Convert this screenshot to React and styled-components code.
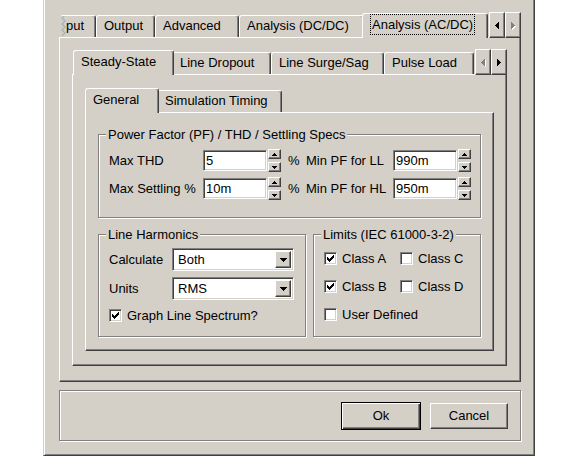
import React from 'react';
import styled, { createGlobalStyle, css } from 'styled-components';

const FACE = '#d4d0c8';
const SHADOW = '#808080';
const DARK = '#404040';
const HI = '#ffffff';

const GlobalStyle = createGlobalStyle`
  html, body { margin: 0; padding: 0; background: #fff; }
  body {
    font-family: "Liberation Sans", Arial, sans-serif;
    font-size: 13px;
    line-height: 15px;
    color: #000;
  }
  *, *::before, *::after { box-sizing: border-box; }
`;

const Window = styled.div`
  margin-left: 43px;
  width: 492px;
  height: 456px;
  background: ${FACE};
  border-left: 1px solid ${FACE};
  border-right: 1px solid ${DARK};
  border-bottom: 1px solid ${DARK};
  box-shadow: inset 1px 0 0 ${HI}, inset -1px -1px 0 ${SHADOW};
  padding: 12px 0 0 15px;
  display: flex;
  flex-direction: column;
`;

/* ---------- tab control ---------- */

const TabControl = styled.div`
  width: ${(p) => p.$w}px;
  display: flex;
  flex-direction: column;
  flex: none;
`;

const TabStrip = styled.div`
  display: flex;
  align-items: flex-end;
  height: 25px;
  padding-left: ${(p) => p.$inset}px;
`;

const Tab = styled.div`
  position: relative;
  flex: none;
  width: ${(p) => p.$w}px;
  height: 22px;
  display: flex;
  align-items: center;
  padding: 0 0 2px ${(p) => (p.$torn ? 0 : 7)}px;
  white-space: nowrap;
  overflow: hidden;
  background: ${FACE};
  border-top: 1px solid ${HI};
  border-left: 1px solid ${(p) => (p.$torn ? FACE : HI)};
  border-right: 1px solid ${DARK};
  box-shadow: inset -1px 0 0 ${SHADOW};
  border-radius: 3px 3px 0 0;
  ${(p) =>
    p.$active &&
    css`
      width: ${p.$w + 4}px;
      height: 25px;
      margin: 0 -2px -1px;
      padding: 0 0 3px 7px;
      z-index: 1;
    `}
`;

const FocusRing = styled.span`
  border: 1px dotted #000;
  padding: 2px 1px;
`;

const TornEdge = styled.svg`
  flex: none;
  width: 5px;
  height: 21px;
  margin-right: 0;
`;

const ArrowPair = styled.div`
  position: relative;
  z-index: 2;
  display: flex;
  margin-left: auto;
  align-self: flex-start;
`;

const ScrollButton = styled.div`
  width: 16px;
  height: 26px;
  display: flex;
  align-items: center;
  justify-content: center;
  background: ${FACE};
  border: 1px solid;
  border-color: ${HI} ${DARK} ${DARK} ${HI};
  box-shadow: inset -1px -1px 0 ${SHADOW};
`;

const Page = styled.div`
  height: ${(p) => p.$h}px;
  background: ${FACE};
  border: 1px solid;
  border-color: ${HI} ${DARK} ${DARK} ${HI};
  box-shadow: inset -1px -1px 0 ${SHADOW};
  padding: ${(p) => p.$pad};
  display: flex;
  flex-direction: column;
  align-items: flex-start;
`;

/* ---------- small pixel glyphs ---------- */

const Glyph = ({ w, h, d, fill = '#000' }) => (
  <svg width={w} height={h} viewBox={`0 0 ${w} ${h}`} shapeRendering="crispEdges">
    <path d={d} fill={fill} />
  </svg>
);

const LEFT = 'M3 0h1v7h-1z M2 1h1v5h-1z M1 2h1v3h-1z M0 3h1v1h-1z';
const RIGHT = 'M0 0h1v7h-1z M1 1h1v5h-1z M2 2h1v3h-1z M3 3h1v1h-1z';
const UP = 'M2 0h1v1h-1z M1 1h3v1h-3z M0 2h5v1h-5z';
const DOWN = 'M0 0h5v1h-5z M1 1h3v1h-3z M2 2h1v1h-1z';
const DROP = 'M0 0h7v1h-7z M1 1h5v1h-5z M2 2h3v1h-3z M3 3h1v1h-1z';
const CHECK =
  'M6 0h1v1h-1z M5 1h2v1h-2z M0 2h1v1h-1z M4 2h3v1h-3z M0 3h2v1h-2z M3 3h3v1h-3z M0 4h5v1h-5z M1 5h3v1h-3z M2 6h1v1h-1z';

const DisabledGlyph = styled.span`
  position: relative;
  display: inline-flex;
  & > svg:first-child {
    position: absolute;
    left: 1px;
    top: 1px;
  }
  & > svg:last-child {
    position: relative;
  }
`;

const Arrow = ({ d, disabled }) =>
  disabled ? (
    <DisabledGlyph>
      <Glyph w={4} h={7} d={d} fill={HI} />
      <Glyph w={4} h={7} d={d} fill={SHADOW} />
    </DisabledGlyph>
  ) : (
    <Glyph w={4} h={7} d={d} />
  );

const TabRow = ({ tabs, inset, leftOn, rightOn }) => (
  <TabStrip $inset={inset}>
    {tabs.map((t) => (
      <Tab key={t.label} $w={t.w} $active={t.active} $torn={t.torn}>
        {t.torn && (
          <TornEdge viewBox="0 0 5 21">
            <polyline
              points="4,0 1,3 4,6 1,9 4,12 1,15 4,18 1,21"
              fill="none"
              stroke="#9fb3bd"
              strokeWidth="1.2"
            />
          </TornEdge>
        )}
        {t.focus ? <FocusRing>{t.label}</FocusRing> : <span>{t.label}</span>}
      </Tab>
    ))}
    {leftOn !== undefined && (
      <ArrowPair>
        <ScrollButton>
          <Arrow d={LEFT} disabled={!leftOn} />
        </ScrollButton>
        <ScrollButton>
          <Arrow d={RIGHT} disabled={!rightOn} />
        </ScrollButton>
      </ArrowPair>
    )}
  </TabStrip>
);

/* ---------- group boxes ---------- */

const Group = styled.div`
  width: ${(p) => (p.$w ? `${p.$w}px` : 'auto')};
  flex: ${(p) => (p.$w ? 'none' : '1')};
  border: 1px solid ${SHADOW};
  box-shadow: inset 1px 1px 0 ${HI}, 1px 1px 0 ${HI};
  padding: 0 9px ${(p) => p.$pb}px 10px;
  display: flex;
  flex-direction: column;
`;

const Caption = styled.div`
  align-self: flex-start;
  margin: -8px 0 0 -3px;
  padding: 0 2px;
  line-height: 15px;
  background: ${FACE};
  white-space: nowrap;
`;

const GroupRow = styled.div`
  display: flex;
  align-items: stretch;
  gap: 7px;
  width: 383px;
  margin-top: 16px;
`;

/* ---------- edit fields ---------- */

const SpecGrid = styled.div`
  display: grid;
  grid-template-columns: 94px 64px 14px 25px 87px 64px 14px;
  grid-auto-rows: 21px;
  row-gap: 7px;
  align-items: center;
  margin-top: 8px;
  white-space: nowrap;
`;

const Unit = styled.span`
  padding-left: 7px;
`;

const Edit = styled.div`
  height: 21px;
  display: flex;
  align-items: center;
  background: #fff;
  border: 1px solid;
  border-color: ${SHADOW} ${HI} ${HI} ${SHADOW};
  box-shadow: inset 1px 1px 0 ${DARK}, inset -1px -1px 0 ${FACE};
  padding: 0 2px 0 2px;
`;

const Spin = styled.div`
  display: flex;
  flex-direction: column;
  gap: 3px;
  padding-left: 1px;
`;

const SpinButton = styled.div`
  width: 13px;
  height: 10px;
  display: flex;
  align-items: center;
  justify-content: center;
  background: ${FACE};
  border: 1px solid;
  border-color: ${HI} ${DARK} ${DARK} ${HI};
  box-shadow: inset -1px -1px 0 ${SHADOW};
`;

const SpinBox = () => (
  <Spin>
    <SpinButton>
      <Glyph w={5} h={3} d={UP} />
    </SpinButton>
    <SpinButton>
      <Glyph w={5} h={3} d={DOWN} />
    </SpinButton>
  </Spin>
);

/* ---------- combo boxes ---------- */

const ComboRow = styled.div`
  display: flex;
  align-items: center;
  margin-top: ${(p) => p.$mt}px;
`;

const RowLabel = styled.span`
  width: 63px;
  flex: none;
`;

const Combo = styled.div`
  width: 122px;
  height: 23px;
  display: flex;
  align-items: center;
  background: #fff;
  border: 1px solid;
  border-color: ${SHADOW} ${HI} ${HI} ${SHADOW};
  box-shadow: inset 1px 1px 0 ${DARK}, inset -1px -1px 0 ${FACE};
  padding: 2px 2px 2px 5px;
`;

const DropButton = styled.div`
  margin-left: auto;
  width: 16px;
  height: 100%;
  display: flex;
  align-items: center;
  justify-content: center;
  background: ${FACE};
  border: 1px solid;
  border-color: ${HI} ${DARK} ${DARK} ${HI};
  box-shadow: inset -1px -1px 0 ${SHADOW};
`;

const ComboBox = ({ value }) => (
  <Combo>
    <span>{value}</span>
    <DropButton>
      <Glyph w={7} h={4} d={DROP} />
    </DropButton>
  </Combo>
);

/* ---------- check boxes ---------- */

const CheckItem = styled.label`
  display: flex;
  align-items: center;
  gap: 5px;
  height: ${(p) => p.$h || 28}px;
  margin-top: ${(p) => p.$mt || 0}px;
  white-space: nowrap;
`;

const Box = styled.span`
  width: 13px;
  height: 13px;
  flex: none;
  display: flex;
  align-items: center;
  justify-content: center;
  background: #fff;
  border: 1px solid;
  border-color: ${SHADOW} ${HI} ${HI} ${SHADOW};
  box-shadow: inset 1px 1px 0 ${DARK}, inset -1px -1px 0 ${FACE};
`;

const Check = ({ checked, label, h, mt }) => (
  <CheckItem $h={h} $mt={mt}>
    <Box>{checked && <Glyph w={7} h={7} d={CHECK} />}</Box>
    <span>{label}</span>
  </CheckItem>
);

const LimitGrid = styled.div`
  display: grid;
  grid-template-columns: 76px auto;
  margin-top: 2px;
`;

/* ---------- footer buttons ---------- */

const Footer = styled.div`
  margin-top: 8px;
  width: 462px;
  height: 51px;
  border: 1px solid ${SHADOW};
  box-shadow: inset 1px 1px 0 ${HI}, 1px 1px 0 ${HI};
  display: flex;
  justify-content: flex-end;
  align-items: center;
  gap: 9px;
  padding-right: 12px;
`;

const PushButton = styled.button`
  font: inherit;
  color: #000;
  width: ${(p) => (p.$default ? 80 : 78)}px;
  height: ${(p) => (p.$default ? 28 : 26)}px;
  padding: 0;
  background: ${FACE};
  border: 1px solid;
  ${(p) =>
    p.$default
      ? css`
          border-color: #000;
          box-shadow: inset 1px 1px 0 ${HI}, inset -1px -1px 0 ${DARK}, inset -2px -2px 0 ${SHADOW};
        `
      : css`
          border-color: ${HI} ${DARK} ${DARK} ${HI};
          box-shadow: inset -1px -1px 0 ${SHADOW};
        `}
`;

/* ---------- tab data ---------- */

const mainTabs = [
  { label: 'put', w: 36, torn: true },
  { label: 'Output', w: 59 },
  { label: 'Advanced', w: 84 },
  { label: 'Analysis (DC/DC)', w: 125 },
  { label: 'Analysis (AC/DC)', w: 122, active: true, focus: true },
];

const modeTabs = [
  { label: 'Steady-State', w: 97, active: true },
  { label: 'Line Dropout', w: 99 },
  { label: 'Line Surge/Sag', w: 113 },
  { label: 'Pulse Load', w: 90 },
];

const innerTabs = [
  { label: 'General', w: 70, active: true },
  { label: 'Simulation Timing', w: 125 },
];

export default function App() {
  return (
    <>
      <GlobalStyle />
      <Window>
        <TabControl $w={462}>
          <TabRow tabs={mainTabs} inset={1} leftOn rightOn={false} />
          <Page $h={345} $pad="11px 0 0 12px">
            <TabControl $w={435}>
              <TabRow tabs={modeTabs} inset={3} leftOn={false} rightOn />
              <Page $h={292} $pad="12px 0 0 12px">
                <TabControl $w={409}>
                  <TabRow tabs={innerTabs} inset={2} />
                  <Page $h={239} $pad="21px 0 0 12px">
                    <Group $w={383} $pb={18}>
                      <Caption>Power Factor (PF) / THD / Settling Specs</Caption>
                      <SpecGrid>
                        <span>Max THD</span>
                        <Edit>5</Edit>
                        <SpinBox />
                        <Unit>%</Unit>
                        <span>Min PF for LL</span>
                        <Edit>990m</Edit>
                        <SpinBox />

                        <span>Max Settling %</span>
                        <Edit>10m</Edit>
                        <SpinBox />
                        <Unit>%</Unit>
                        <span>Min PF for HL</span>
                        <Edit>950m</Edit>
                        <SpinBox />
                      </SpecGrid>
                    </Group>

                    <GroupRow>
                      <Group $w={208} $pb={13}>
                        <Caption>Line Harmonics</Caption>
                        <ComboRow $mt={6}>
                          <RowLabel>Calculate</RowLabel>
                          <ComboBox value="Both" />
                        </ComboRow>
                        <ComboRow $mt={6}>
                          <RowLabel>Units</RowLabel>
                          <ComboBox value="RMS" />
                        </ComboRow>
                        <Check checked label="Graph Line Spectrum?" h={15} mt={8} />
                      </Group>

                      <Group $pb={8}>
                        <Caption>Limits (IEC 61000-3-2)</Caption>
                        <LimitGrid>
                          <Check checked label="Class A" />
                          <Check label="Class C" />
                          <Check checked label="Class B" />
                          <Check label="Class D" />
                          <Check label="User Defined" />
                        </LimitGrid>
                      </Group>
                    </GroupRow>
                  </Page>
                </TabControl>
              </Page>
            </TabControl>
          </Page>
        </TabControl>

        <Footer>
          <PushButton $default>Ok</PushButton>
          <PushButton>Cancel</PushButton>
        </Footer>
      </Window>
    </>
  );
}
